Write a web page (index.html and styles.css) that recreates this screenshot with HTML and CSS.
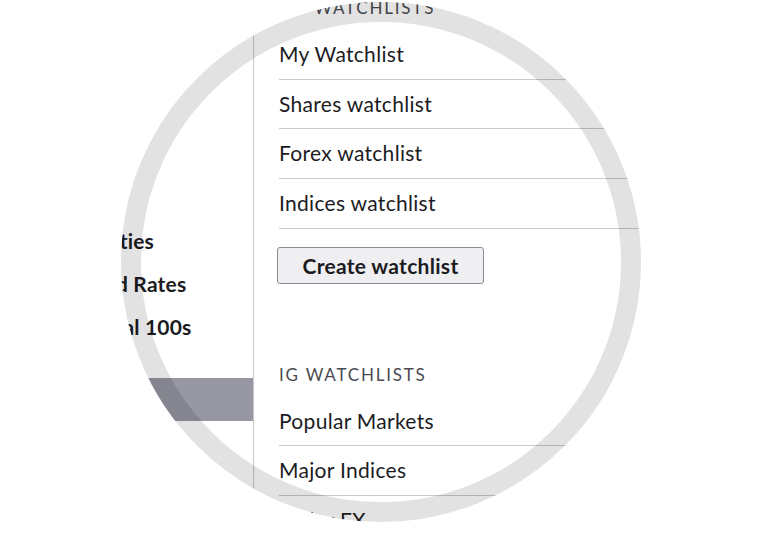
FILE: index.html
```html
<!DOCTYPE html>
<html lang="en">
<head>
    <meta charset="UTF-8">
    <meta name="viewport" content="width=device-width, initial-scale=1.0">
    <title>Watchlists</title>
    <link rel="stylesheet" href="styles.css">
</head>
<body>

    <div class="lens">
        <!-- Magnified part of the page, clipped to the lens -->
        <div class="view">

            <!-- Market navigation -->
            <div class="sidebar">
                <div class="nav-item">Commodities</div>
                <div class="nav-item">Bonds and Rates</div>
                <div class="nav-item">Agricultural 100s</div>
                <div class="nav-item selected"></div>
            </div>

            <!-- Watchlist panel -->
            <div class="panel">
                <div class="section-title first">My Watchlists</div>
                <div class="row">My Watchlist</div>
                <div class="row">Shares watchlist</div>
                <div class="row">Forex watchlist</div>
                <div class="row">Indices watchlist</div>

                <button class="create-btn">Create watchlist</button>

                <div class="section-title">IG Watchlists</div>
                <div class="row">Popular Markets</div>
                <div class="row">Major Indices</div>
                <div class="row">Major FX</div>
            </div>
        </div>

        <!-- Lens rim -->
        <svg class="rim" width="760" height="560" viewBox="0 0 760 560">
            <circle cx="381" cy="262" r="250" fill="none" stroke="rgba(0,0,0,0.115)" stroke-width="20" />
        </svg>
    </div>

</body>
</html>
```

FILE: styles.css
```css
body {
    margin: 0;
    background-color: #fff;
    font-family: 'Lato', 'Liberation Sans', sans-serif;
    color: #1c1c1f;
}

/* Lens area */
.lens {
    position: relative;
    width: 760px;
    height: 560px;
    overflow: hidden;
}

.view {
    display: flex;
    height: 560px;
    clip-path: circle(260px at 381px 262px);
}

.rim {
    position: absolute;
    top: 0;
    left: 0;
    pointer-events: none;
}

/* Navigation column */
.sidebar {
    width: 253px;
    flex-shrink: 0;
    padding-top: 219px;
    border-right: 1px solid #c9c9ce;
    box-shadow: -1px 0 3px rgba(0, 0, 0, 0.08);
}

.nav-item {
    height: 43px;
    line-height: 43px;
    padding-left: 28px;
    font-size: 21px;
    font-weight: 700;
    letter-spacing: 0.2px;
    white-space: nowrap;
}

.nav-item.selected {
    margin-top: 30px;
    background-color: #9797a3;
}

/* Watchlist column */
.panel {
    flex: 1;
    padding-left: 25px;
}

.section-title {
    font-size: 17px;
    letter-spacing: 1.8px;
    text-transform: uppercase;
    color: #4a4a50;
    padding-top: 71px;
    height: 42px;
    line-height: 40px;
}

.section-title.first {
    padding-top: 0;
    height: 30px;
    line-height: 16px;
}

.row {
    height: 48.7px;
    line-height: 48.7px;
    font-size: 21px;
    letter-spacing: 0.3px;
    border-bottom: 1px solid #c9c9ce;
    white-space: nowrap;
}

.create-btn {
    display: block;
    margin: 18px 0 0 -2px;
    width: 207px;
    height: 37px;
    background-color: #efeff2;
    border: 1.5px solid #8b8b95;
    border-radius: 3px;
    font-family: 'Lato', 'Liberation Sans', sans-serif;
    font-size: 21px;
    font-weight: 700;
    letter-spacing: 0.3px;
    color: #1c1c1f;
}
```
